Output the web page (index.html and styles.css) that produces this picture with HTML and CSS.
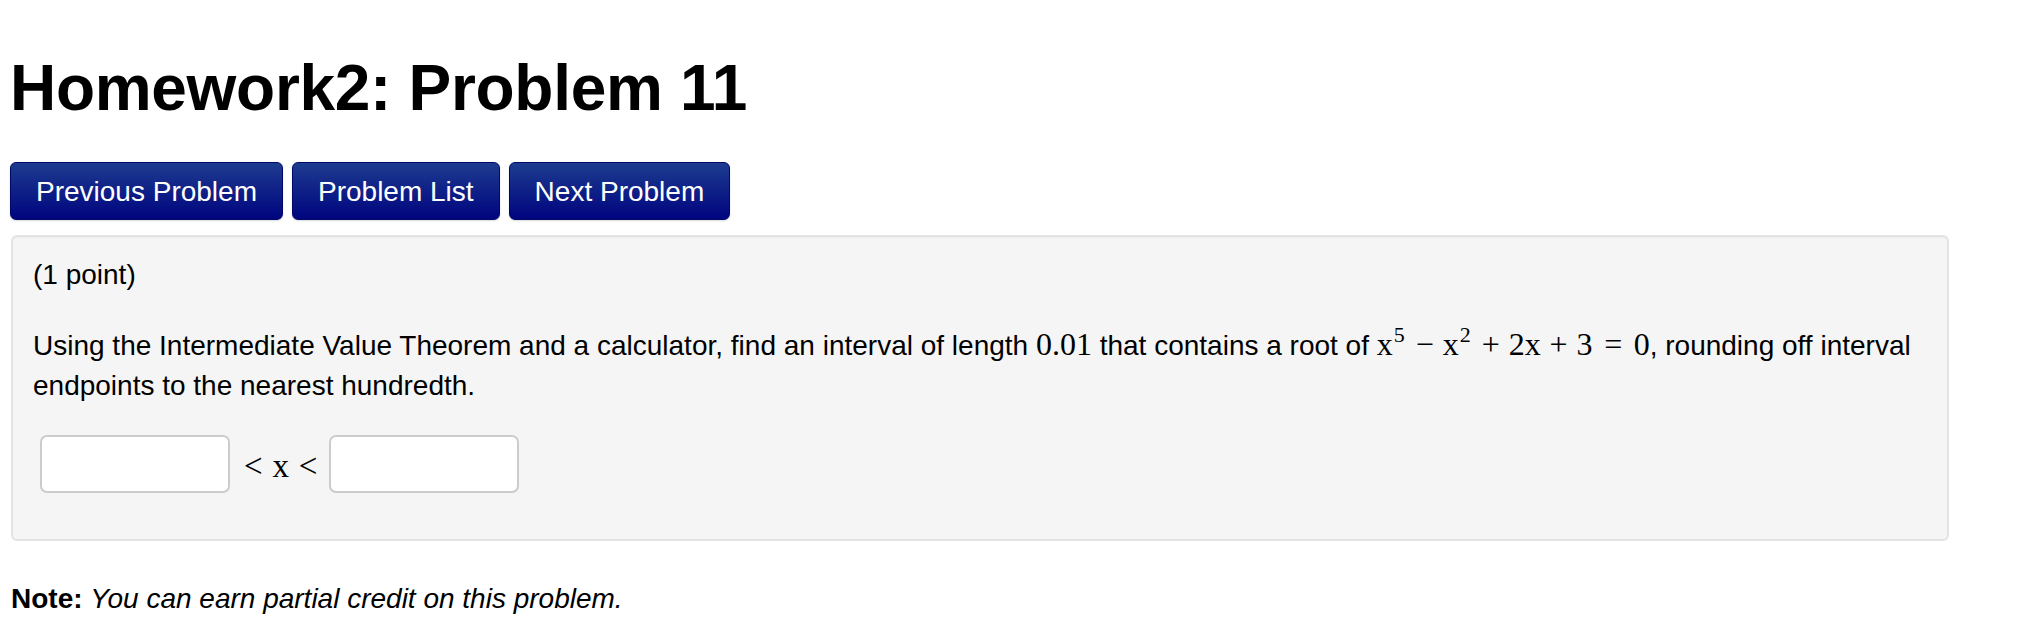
FILE: index.html
```html
<!DOCTYPE html>
<html lang="en">
<head>
<meta charset="utf-8">
<title>Homework2: Problem 11</title>
<link rel="stylesheet" href="styles.css">
</head>
<body>
<main class="page">
  <h1 class="title">Homework2: Problem 11</h1>
  <nav class="nav">
    <a class="btn" href="#">Previous Problem</a>
    <a class="btn" href="#">Problem List</a>
    <a class="btn" href="#">Next Problem</a>
  </nav>
  <section class="well">
    <p class="points">(1 point)</p>
    <p class="text">Using the Intermediate Value Theorem and a calculator, find an interval of length <span class="m">0.01</span> that contains a root of <span class="m">x<sup>5</sup><span class="op">&minus;</span>x<sup>2</sup><span class="op">+</span>2x<span class="op">+</span>3<span class="rel">=</span>0</span>, rounding off interval endpoints to the nearest hundredth.</p>
    <div class="answer">
      <input class="box" type="text" aria-label="lower bound">
      <span class="m ineq"><span class="lt">&lt;</span>x<span class="lt">&lt;</span></span>
      <input class="box" type="text" aria-label="upper bound">
    </div>
  </section>
  <p class="note"><b>Note:</b> <i>You can earn partial credit on this problem.</i></p>
</main>
</body>
</html>
```
FILE: styles.css
```css
html, body {
  margin: 0;
  padding: 0;
  background: #fff;
}
body {
  font-family: "Liberation Sans", Arial, Helvetica, sans-serif;
  color: #000;
}
.page {
  padding: 53px 81px 0 11px;
}
.title {
  margin: 0 0 0 -1px;
  font-size: 64px;
  line-height: 70px;
  font-weight: bold;
  letter-spacing: -0.3px;
}
.nav {
  display: flex;
  gap: 9px;
  margin-top: 39px;
}
.btn {
  display: block;
  font-size: 28px;
  line-height: 34px;
  padding: 12px 25px 10px;
  color: #fff;
  text-decoration: none;
  background: linear-gradient(#1d3c8f, #00047f);
  border: 1px solid #000a66;
  border-radius: 6px;
  box-shadow: 0 1px 2px rgba(0,0,0,0.15);
}
.nav .btn:first-child { margin-left: -1px; }
.well {
  margin-top: 15px;
  height: 302px;
  box-sizing: content-box;
  background: #f5f5f5;
  border: 2px solid #e3e3e3;
  border-radius: 6px;
  padding: 0 20px;
  box-shadow: inset 0 1px 2px rgba(0,0,0,0.04);
}
.points, .text {
  margin: 0;
  font-size: 28px;
  line-height: 40px;
}
.points {
  padding-top: 18px;
}
.text {
  margin-top: 31px;
  margin-right: -16px;
}
.m {
  font-family: "Liberation Serif", "Times New Roman", serif;
  font-size: 32px;
  line-height: 1;
}
.m sup {
  font-size: 22px;
  line-height: 0;
  vertical-align: 13px;
  margin-left: 1px;
  margin-right: 2px;
}
.op {
  margin: 0 0.28em;
}
.rel {
  margin: 0 0.36em;
}
.answer {
  display: flex;
  align-items: center;
  gap: 10px;
  margin-top: 29px;
  padding-left: 7px;
}
.box {
  margin: 0;
  padding: 0 8px;
  box-sizing: border-box;
  width: 190px;
  height: 58px;
  border: 2px solid #cccccc;
  border-radius: 7px;
  background: #fff;
  font-size: 25px;
}
.ineq {
  font-size: 33px;
  margin-top: 4px;
}
.lt {
  margin: 0 0.3em;
}
.ineq .lt:first-child { margin-left: 0.12em; }
.ineq .lt:last-child { margin-right: 0.05em; }
.note {
  margin: 38px 0 0;
  font-size: 28px;
  line-height: 40px;
}
```
